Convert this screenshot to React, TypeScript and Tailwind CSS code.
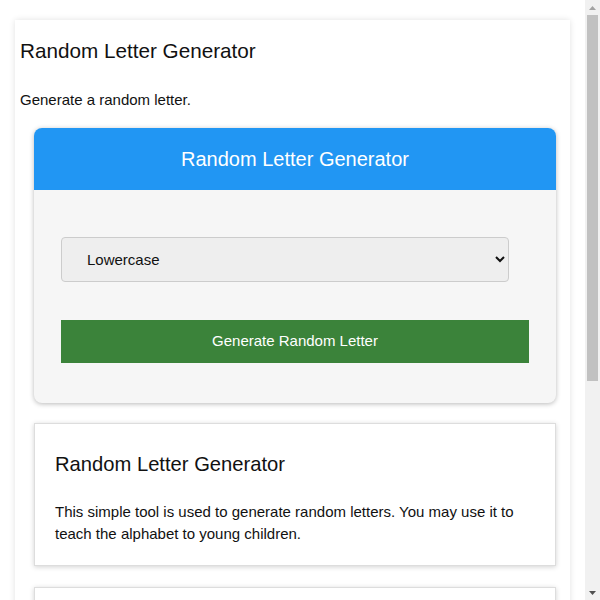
import { useState } from "react";

const LETTERS = "abcdefghijklmnopqrstuvwxyz";

function ScrollBar() {
  return (
    <div className="flex h-[600px] w-[15px] flex-col bg-[#f1f1f1]">
      <div className="flex h-[15px] items-center justify-center">
        <svg width="7" height="4" viewBox="0 0 7 4">
          <path d="M0 4 L3.5 0 L7 4 Z" fill="#a3a3a3" />
        </svg>
      </div>
      <div className="mx-[2px] h-[366px] bg-[#c1c1c1]" />
      <div className="flex-1" />
      <div className="flex h-[15px] items-center justify-center">
        <svg width="7" height="4" viewBox="0 0 7 4">
          <path d="M0 0 L7 0 L3.5 4 Z" fill="#505050" />
        </svg>
      </div>
    </div>
  );
}

export default function App() {
  const [mode, setMode] = useState("lower");
  const [letter, setLetter] = useState("");

  const generate = () => {
    const c = LETTERS[Math.floor(Math.random() * LETTERS.length)];
    if (mode === "upper") setLetter(c.toUpperCase());
    else if (mode === "both") setLetter(Math.random() < 0.5 ? c : c.toUpperCase());
    else setLetter(c);
  };

  return (
    <div className="flex h-[600px] w-[600px] bg-white font-['Liberation_Sans',Arial,sans-serif] text-[#111]">
      <div className="h-[600px] w-[585px] overflow-hidden">
        <div className="ml-[15px] mt-[20px] w-[555px] bg-white px-[5px] pb-[30px] shadow-[0_0_6px_rgba(0,0,0,0.12)]">
          <h1 className="pt-[19px] text-[20.7px] leading-[24px] font-normal">Random Letter Generator</h1>
          <p className="mt-[26px] text-[15px] leading-[22px]">Generate a random letter.</p>

          {/* tool card */}
          <div className="ml-[14px] mt-[17px] w-[522px] overflow-hidden rounded-[8px] bg-[#f6f6f6] shadow-[0_1px_5px_rgba(0,0,0,0.28)]">
            <div className="flex h-[62px] items-center justify-center bg-[#2196f3] text-[20px] text-white">
              Random Letter Generator
            </div>
            <div className="px-[27px] pb-[40px] pt-[47px]">
              <select
                value={mode}
                onChange={(e) => setMode(e.target.value)}
                className="h-[45px] w-[448px] rounded-[4px] border border-[#ccc] bg-[#eee] pl-[21px] pr-[12px] text-[15px] text-[#111]"
              >
                <option value="lower">Lowercase</option>
                <option value="upper">Uppercase</option>
                <option value="both">Both</option>
              </select>
              <button
                onClick={generate}
                className="mt-[38px] flex h-[43px] w-[468px] items-center justify-center bg-[#3b833a] text-[15px] text-white"
              >
                Generate Random Letter
              </button>
              {letter && <div className="mt-4 text-center text-[48px]">{letter}</div>}
            </div>
          </div>

          {/* about */}
          <div className="ml-[14px] mt-[20px] w-[522px] border border-[#ddd] bg-white px-[20px] pb-[20px] pt-[28px] shadow-[0_1px_5px_rgba(0,0,0,0.18)]">
            <h2 className="text-[20.2px] leading-[24px] font-normal">Random Letter Generator</h2>
            <p className="mt-[25px] text-[15px] leading-[22px]">
              This simple tool is used to generate random letters. You may use it to teach the alphabet to young children.
            </p>
          </div>

          <div className="ml-[14px] mt-[21px] h-[60px] w-[522px] border border-[#ddd] bg-white shadow-[0_1px_5px_rgba(0,0,0,0.18)]" />
        </div>
      </div>
      <ScrollBar />
    </div>
  );
}
